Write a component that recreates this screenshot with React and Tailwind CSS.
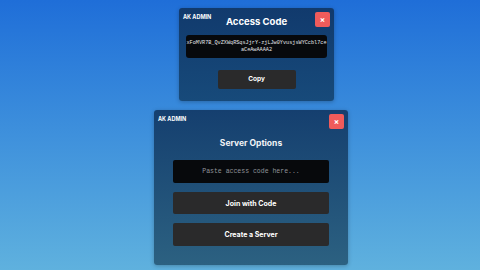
const font = { fontFamily: 'Inter, "Liberation Sans", sans-serif' };

function CloseButton({ className }) {
  return (
    <button
      className={`absolute flex h-[15px] w-[15px] items-center justify-center rounded-[2px] bg-[#ef5b5b] text-[8px] font-bold leading-none text-white ${className}`}
    >
      ×
    </button>
  );
}

export default function App() {
  return (
    <div
      className="flex h-[270px] w-[480px] flex-col items-center overflow-hidden bg-gradient-to-b from-[#1f6ed8] to-[#5fb1de] pl-[22px] pt-[8px]"
      style={font}
    >
      {/* access code panel */}
      <div className="relative ml-[11px] flex h-[93px] w-[155px] flex-col items-center rounded-[3px] bg-gradient-to-b from-[#113a6d] to-[#174a7a] px-[7px] pt-[7px] shadow-[0_1px_4px_rgba(0,0,0,0.25)]">
        <span className="absolute left-[4px] top-[6px] text-[5.5px] font-bold leading-[7px] text-white">AK ADMIN</span>
        <CloseButton className="right-[4px] top-[4px]" />
        <h2 className="text-[9.5px] font-bold leading-[14px] text-white">Access Code</h2>
        <div className="mt-[6px] flex h-[23px] w-full flex-col items-center justify-center rounded-[3px] bg-[#07090c] font-mono text-[5.2px] leading-[7px] text-[#e5e7eb]">
          <span>xFoMVR7B_QvZXWqRSqsJjrY-zjLJw0YvusjsWYCcbl7ce</span>
          <span>aCeAwAAAA2</span>
        </div>
        <button className="mt-[12px] h-[19px] w-[78px] rounded-[2px] bg-[#2a2a2b] text-[6.5px] font-bold leading-none text-white">
          Copy
        </button>
      </div>

      {/* server options panel */}
      <div className="relative mt-[9px] flex h-[155px] w-[194px] flex-col items-center rounded-[3px] bg-gradient-to-b from-[#153f6f] to-[#2c6181] px-[19px] pt-[26px] shadow-[0_1px_4px_rgba(0,0,0,0.25)]">
        <span className="absolute left-[4px] top-[6px] text-[5.5px] font-bold leading-[7px] text-white">AK ADMIN</span>
        <CloseButton className="right-[4px] top-[4px]" />
        <h2 className="text-[8.5px] font-bold leading-[14px] text-[#f1f3f6]">Server Options</h2>
        <input
          placeholder="Paste access code here..."
          className="mt-[10px] h-[23px] w-full rounded-[2px] bg-[#07090c] text-center font-mono text-[6.5px] text-white outline-none placeholder:text-[#8f9399]"
        />
        <button className="mt-[9px] h-[22px] w-full rounded-[2px] bg-[#2a2a2b] text-[7px] font-bold leading-none text-white">
          Join with Code
        </button>
        <button className="mt-[9px] h-[23px] w-full rounded-[2px] bg-[#2a2a2b] text-[7px] font-bold leading-none text-white">
          Create a Server
        </button>
      </div>
    </div>
  );
}
